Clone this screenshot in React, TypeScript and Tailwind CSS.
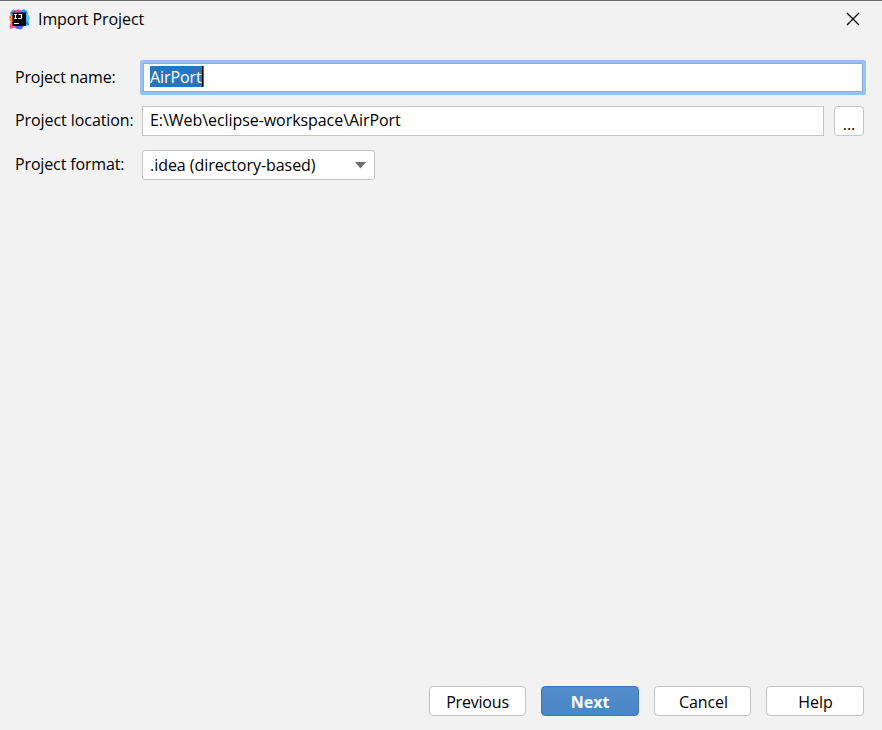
const IdeaLogo = () => {
  return (
    <svg width="21" height="21" viewBox="0 0 21 21" className="-mt-px ml-[9px]">
      <path d="M1 3.5L4 .5l4 1-2 5-4 2z" fill="#3f9bf0" />
      <path d="M5 1.5l5-1.3 3 1.8 1 3-8 3-3-3z" fill="#f04a9c" />
      <path d="M0 8l4-4 4 2-1 11-4-1.5L1 12z" fill="#fd8a2e" />
      <path d="M.5 17L2 12.5l4 1 4 4-2 2.3-3-1-4 1.2z" fill="#f2559b" />
      <path d="M11 2l4-1.8 3.5 2.3.4 3 1.6 3-1 3.5.5 4-4.5 1-4 3-4-1-1-2 6-6z" fill="#2196f3" />
      <path d="M17 3l2 2.5L20.5 9l-1 3-2 1z" fill="#52c8f5" />
      <path d="M7 17h5l2 2-2.5 1.5-4-1z" fill="#4668e6" />
      <path d="M3.5 3.5H17V17H3.5z" fill="#090708" />
      <path d="M5 5.5h3M6.500 5.5v4M5 9.5h3M9.5 5.5h3v3.200q0 .8-.8.8H9.3M5 14.5h5" fill="none" stroke="#fff" strokeWidth="1.1" />
    </svg>
  )
}

const App = () => {
  return (
    <div className="flex h-[730px] w-[882px] flex-col border-t border-[#6d6b6d] bg-[#f2f2f2] font-['Open_Sans','Noto_Sans',sans-serif] text-[16px] leading-[22px] text-black">
      <div className="flex h-[37px] items-center">
        <IdeaLogo />
        <h1 className="-mt-px ml-2 w-[107px] whitespace-nowrap tracking-[-0.08px]">Import Project</h1>
        <button className="-mt-[2px] mr-[22px] ml-auto">
          <svg width="14" height="14" viewBox="0 0 14 14">
            <path d="M1 1l12 12M13 1L1 13" stroke="#111" strokeWidth="1.4" />
          </svg>
        </button>
      </div>

      <div className="mt-[22px] flex h-[35px] items-center pl-[15px]">
        <label className="w-[125px] pb-[2px] whitespace-nowrap tracking-[-0.2px]">Project name:</label>
        <div className="flex h-[35px] w-[726px] items-center rounded-[2px] border-[3px] border-[#97c3f3] bg-white">
          <div className="flex h-full w-full items-start border border-[#87afda] pt-[2px] pl-[6px]">
            <span className="flex h-[21px] w-[54px] items-center justify-between bg-[#2675bf] pr-px whitespace-nowrap text-white">
              <span className="w-[52px] pt-[2px] leading-[21px] tracking-[-0.1px]">AirPort</span>
              <i className="h-[21px] w-px shrink-0 bg-black"></i>
            </span>
          </div>
        </div>
      </div>

      <div className="mt-[11px] flex h-[30px] items-center pl-[15px]">
        <label className="w-[127px] pb-[2px] whitespace-nowrap tracking-[-0.07px]">Project location:</label>
        <div className="flex h-[30px] w-[682px] items-center border border-[#c4c4c4] bg-white pb-[2px] pl-[7px] whitespace-nowrap tracking-[-0.06px]">
          E:\Web\eclipse-workspace\AirPort
        </div>
        <button className="ml-[10px] h-[30px] w-[30px] rounded-[4px] border border-[#c4c4c4] bg-white pt-[5px]">...</button>
      </div>

      <div className="mt-[14px] flex h-[30px] items-center pl-[15px]">
        <label className="w-[127px] pb-[2px] whitespace-nowrap tracking-[-0.14px]">Project format:</label>
        <div className="flex h-[30px] w-[233px] items-center justify-between rounded-[3px] border border-[#c4c4c4] bg-white pr-2 pl-[7px]">
          <span className="whitespace-nowrap tracking-[-0.05px]">.idea (directory-based)</span>
          <svg width="11" height="7" viewBox="0 0 11 7">
            <path d="M0 0h11L5.5 6.5z" fill="#6e6e6e" />
          </svg>
        </div>
      </div>

      <div className="mt-auto mb-[14px] flex justify-end gap-[15px] pr-[18px]">
        <button className="h-[30px] w-[97px] rounded-[4px] border border-[#c4c4c4] bg-white pt-[2px] tracking-[-0.2px]">Previous</button>
        <button className="h-[30px] w-[98px] rounded-[4px] border border-[#3d75b2] bg-linear-to-b from-[#528ccb] to-[#4a87c6] pt-[2px] font-bold text-white">Next</button>
        <button className="h-[30px] w-[97px] rounded-[4px] border border-[#c4c4c4] bg-white pt-[2px] pl-[2px] tracking-[-0.1px]">Cancel</button>
        <button className="h-[30px] w-[98px] rounded-[4px] border border-[#c4c4c4] bg-white pt-[2px] pl-px">Help</button>
      </div>
    </div>
  )
}

export default App
